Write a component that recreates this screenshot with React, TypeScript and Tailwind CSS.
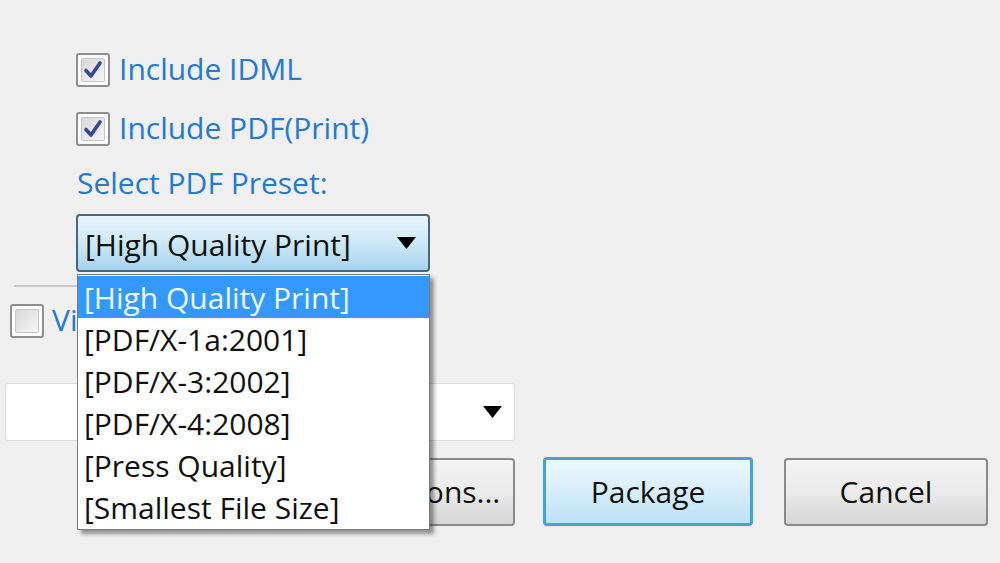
import React from "react";

function Check({ checked }: { checked: boolean }) {
  return (
    <div className="w-[34px] h-[34px] shrink-0 rounded-[3px] border-2 border-[#8e8f8f] bg-[#fbfbfb] p-[3px]">
      <div className="w-full h-full rounded-[2px] border border-[#c6c6c6] bg-gradient-to-br from-[#d8d8d8] to-[#f7f7f7] flex items-center justify-center">
        {checked && (
          <svg width="20" height="20" viewBox="0 0 20 20">
            <path d="M3 10.5 L8 16 L17 3" fill="none" stroke="#34489a" strokeWidth="3.6" strokeLinecap="round" strokeLinejoin="round" />
          </svg>
        )}
      </div>
    </div>
  );
}

function Arrow() {
  return (
    <svg width="19" height="12" viewBox="0 0 19 12">
      <path d="M0 0 L19 0 L9.5 12 Z" fill="#000" />
    </svg>
  );
}

const items = [
  "[High Quality Print]",
  "[PDF/X-1a:2001]",
  "[PDF/X-3:2002]",
  "[PDF/X-4:2008]",
  "[Press Quality]",
  "[Smallest File Size]",
];

export default function App() {
  return (
    <div className="relative w-[1000px] h-[563px] bg-[#f0f0f0] overflow-hidden font-['Open_Sans',_'Noto_Sans',_sans-serif] text-[30px] leading-[34px]">
      <div className="flex flex-col pl-[76px] pt-[53px]">
        <div className="flex items-center gap-[9px] h-[34px]">
          <Check checked />
          <span className="text-[#2479d0] -mt-[3px]">Include IDML</span>
        </div>
        <div className="flex items-center gap-[9px] h-[34px] mt-[25px]">
          <Check checked />
          <span className="text-[#2479d0] -mt-[3px]">Include PDF(Print)</span>
        </div>
        <div className="mt-[20px] h-[34px] text-[#2479d0] pl-[1px]">Select PDF Preset:</div>
        <div className="relative mt-[14px] w-[354px]">
          <div className="h-[58px] rounded-[4px] border-2 border-[#46677e] bg-gradient-to-b from-[#eaf5fc] via-[#cde8f7] to-[#a6d4ee] flex items-center justify-between pl-[7px] pr-[12px]">
            <span className="text-[#111] pt-[4px]">[High Quality Print]</span>
            <Arrow />
          </div>
          <div className="absolute left-[1px] top-full mt-[2px] w-[353px] bg-white border border-[#7a7a7a] shadow-[4px_4px_4px_rgba(0,0,0,0.4)] z-10 py-[1px]">
            {items.map((it, i) => (
              <div
                key={it}
                className={
                  i === 0
                    ? "h-[42px] leading-[40px] pt-[2px] pl-[6px] bg-[#3399ff] text-[#eef6ff]"
                    : "h-[42px] leading-[40px] pt-[2px] pl-[6px] text-[#111]"
                }
              >
                {it}
              </div>
            ))}
          </div>
        </div>
      </div>

      <div className="flex flex-col pl-[5px]">
        <div className="mt-[13px] ml-[9px] w-[300px] h-[2px] bg-[#c8c8c8]" />
        <div className="mt-[17px] ml-[5px] flex items-center gap-[8px] h-[34px]">
          <Check checked={false} />
          <span className="text-[#2479d0] -mt-[3px]">View Report</span>
        </div>
        <div className="mt-[45px] w-[510px] h-[58px] rounded-[3px] border border-[#dcdcdc] bg-white flex items-center justify-end pr-[12px]">
          <Arrow />
        </div>
        <div className="mt-[16px] flex items-center h-[69px]">
          <div className="ml-[291px] w-[219px] h-[68px] rounded-[4px] border-2 border-[#8a8a8a] bg-gradient-to-b from-[#f4f4f4] via-[#ebebeb] to-[#d6d6d6] flex items-center justify-center text-[#111]">
            Instructions...
          </div>
          <div className="ml-[28px] w-[210px] h-[69px] rounded-[4px] border-[3px] border-[#3fa4de] bg-gradient-to-b from-[#edf7fd] via-[#d7eefb] to-[#bde2f5] flex items-center justify-center text-[#111]">
            Package
          </div>
          <div className="ml-[31px] w-[204px] h-[68px] rounded-[4px] border-2 border-[#8a8a8a] bg-gradient-to-b from-[#f4f4f4] via-[#ebebeb] to-[#d6d6d6] flex items-center justify-center text-[#111]">
            Cancel
          </div>
        </div>
      </div>
    </div>
  );
}
